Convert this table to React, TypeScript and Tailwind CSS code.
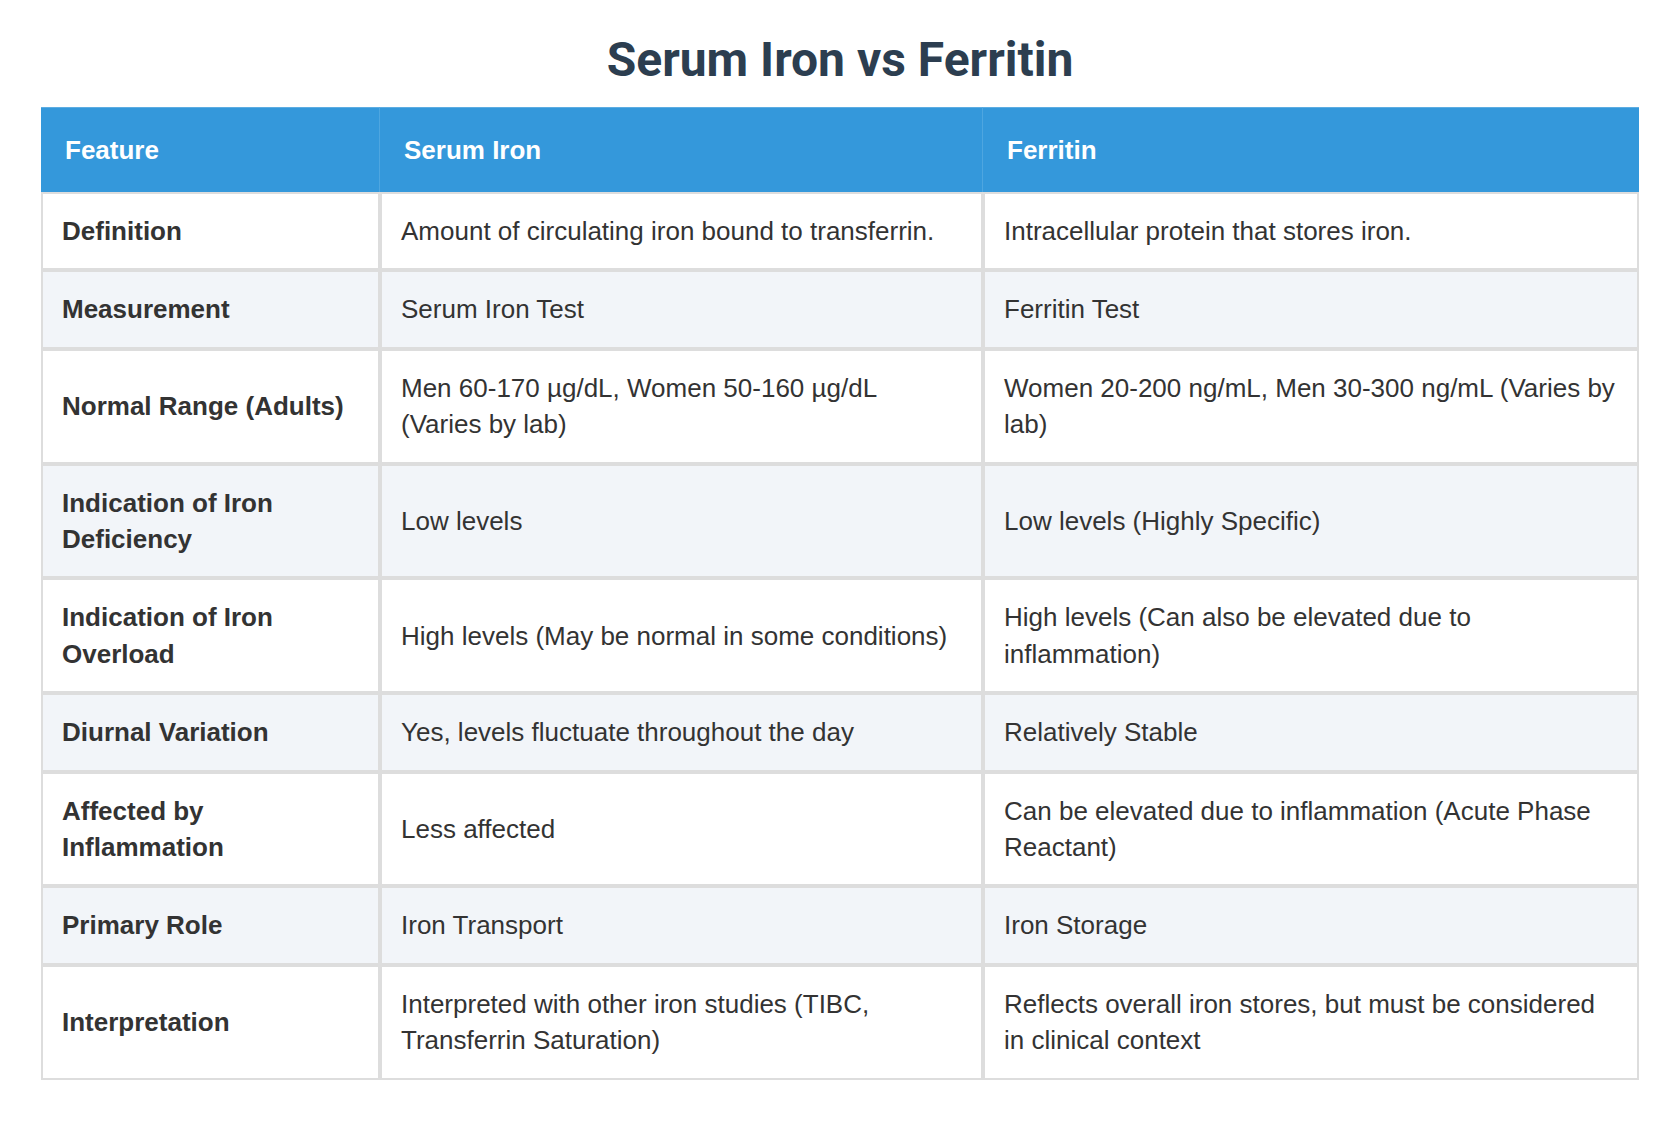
const rows: { feature: string; serum: string; ferritin: string }[] = [
  {
    feature: "Definition",
    serum: "Amount of circulating iron bound to transferrin.",
    ferritin: "Intracellular protein that stores iron.",
  },
  { feature: "Measurement", serum: "Serum Iron Test", ferritin: "Ferritin Test" },
  {
    feature: "Normal Range (Adults)",
    serum: "Men 60-170 µg/dL, Women 50-160 µg/dL (Varies by lab)",
    ferritin: "Women 20-200 ng/mL, Men 30-300 ng/mL (Varies by lab)",
  },
  {
    feature: "Indication of Iron Deficiency",
    serum: "Low levels",
    ferritin: "Low levels (Highly Specific)",
  },
  {
    feature: "Indication of Iron Overload",
    serum: "High levels (May be normal in some conditions)",
    ferritin: "High levels (Can also be elevated due to inflammation)",
  },
  {
    feature: "Diurnal Variation",
    serum: "Yes, levels fluctuate throughout the day",
    ferritin: "Relatively Stable",
  },
  {
    feature: "Affected by Inflammation",
    serum: "Less affected",
    ferritin: "Can be elevated due to inflammation (Acute Phase Reactant)",
  },
  { feature: "Primary Role", serum: "Iron Transport", ferritin: "Iron Storage" },
  {
    feature: "Interpretation",
    serum: "Interpreted with other iron studies (TIBC, Transferrin Saturation)",
    ferritin: "Reflects overall iron stores, but must be considered in clinical context",
  },
];

const th =
  "bg-[#3498db] px-[24px] py-[24px] text-left align-middle text-[26px] font-bold leading-[36px] text-white border-t border-t-[#5dade2]";
const td = "border-2 border-[#dddddd] px-[19px] py-[19px] align-middle text-[26px] leading-[36.4px]";

export default function App() {
  return (
    <div className="min-h-[1122px] bg-white font-['Liberation_Sans',Arial,sans-serif] text-[#333333]">
      <h1 className="pt-[32px] pb-[19px] text-center font-['Roboto',sans-serif] text-[48px] font-bold leading-[56px] text-[#2c3e50]">
        Serum Iron vs Ferritin
      </h1>
      <div className="px-[41px]">
        <table className="w-full table-fixed border-separate border-spacing-0">
          <colgroup>
            <col className="w-[339px]" />
            <col className="w-[603px]" />
            <col />
          </colgroup>
          <thead>
            <tr>
              <th className={th + " border-r border-r-[#4ea6e0]"}>Feature</th>
              <th className={th + " border-r border-r-[#4ea6e0]"}>Serum Iron</th>
              <th className={th}>Ferritin</th>
            </tr>
          </thead>
          <tbody>
            {rows.map((row, i) => (
              <tr key={row.feature} className={i % 2 === 1 ? "bg-[#f2f5f9]" : "bg-white"}>
                <td className={td + " font-bold"}>{row.feature}</td>
                <td className={td}>{row.serum}</td>
                <td className={td}>{row.ferritin}</td>
              </tr>
            ))}
          </tbody>
        </table>
      </div>
    </div>
  );
}
